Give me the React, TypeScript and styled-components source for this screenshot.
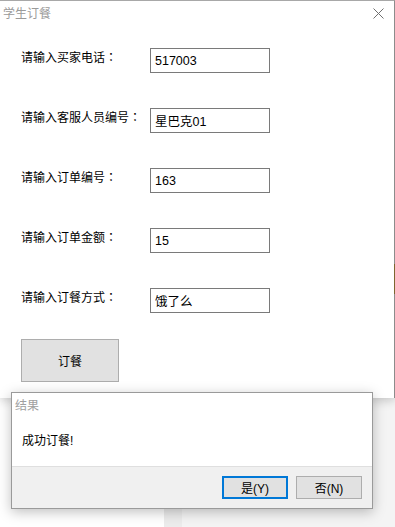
import React from 'react';
import styled, { createGlobalStyle } from 'styled-components';

const GlobalStyle = createGlobalStyle`
  html, body {
    margin: 0;
    padding: 0;
  }
  body {
    font-family: "Liberation Sans", "Noto Sans CJK SC", sans-serif;
    font-size: 12px;
    color: #000;
  }
`;

const Desktop = styled.div`
  position: relative;
  width: 395px;
  height: 527px;
  overflow: hidden;
  background: linear-gradient(
    to right,
    #ffffff 164px,
    #ececec 164px,
    #ececec 182px,
    #f4f4f4 182px
  );
`;

const MainWindow = styled.div`
  position: absolute;
  left: 0;
  top: 0;
  width: 394px;
  height: 397px;
  background: #fff;
  border-top: 1px solid #a8a8a8;
  border-right: 1px solid #8c8c8c;
  box-shadow: 0 2px 10px rgba(0, 0, 0, 0.22);
  display: flex;
  flex-direction: column;
`;

const AccentMark = styled.div`
  position: absolute;
  right: -1px;
  top: 263px;
  width: 1px;
  height: 30px;
  background: #7d6630;
`;

const TitleBar = styled.div`
  height: 28px;
  display: flex;
  align-items: center;
  justify-content: space-between;
  padding: 0 10px 0 3px;
`;

const TitleText = styled.span`
  color: #9a9a9a;
  font-size: 12px;
  line-height: 28px;
  margin-top: -2px;
`;

const CloseIcon = styled.svg`
  width: 11px;
  height: 11px;
  margin-top: -3px;
`;

const Form = styled.div`
  display: flex;
  flex-direction: column;
  gap: 35px;
  padding: 19px 0 0 21px;
`;

const Row = styled.div`
  display: flex;
  align-items: flex-start;
`;

const Label = styled.span`
  width: 129px;
  line-height: 17px;
  font-size: 12px;
  white-space: nowrap;
`;

const Colon = styled.span`
  font-family: "Noto Sans CJK TC", "Noto Sans CJK SC", sans-serif;
`;

const TextBox = styled.input`
  box-sizing: border-box;
  width: 120px;
  height: 25px;
  border: 1px solid #7a7a7a;
  padding: 0 0 0 4px;
  margin: 0;
  font-family: "Liberation Sans", "Noto Sans CJK SC", sans-serif;
  font-size: 12.5px;
  color: #000;
  background: #fff;
  outline: none;
`;

const OrderButton = styled.button`
  box-sizing: border-box;
  width: 98px;
  height: 43px;
  margin-top: -9px;
  background: #e1e1e1;
  border: 1px solid #adadad;
  font-family: "Liberation Sans", "Noto Sans CJK SC", sans-serif;
  font-size: 12px;
  color: #000;
  padding: 0;
`;

const Dialog = styled.div`
  position: absolute;
  left: 11px;
  top: 392px;
  width: 360px;
  height: 115px;
  background: #fff;
  border: 1px solid #9a9a9a;
  box-shadow: 0 3px 12px rgba(0, 0, 0, 0.25);
  display: flex;
  flex-direction: column;
`;

const DialogTitle = styled.div`
  height: 26px;
  padding-left: 3px;
  color: #a0a0a0;
  font-size: 12px;
  line-height: 26px;
`;

const DialogBody = styled.div`
  flex: 1;
  padding: 14px 0 0 10px;
  font-size: 12px;
  line-height: 17px;
`;

const DialogFooter = styled.div`
  height: 42px;
  box-sizing: border-box;
  border-top: 1px solid #dfdfdf;
  background: #f0f0f0;
  display: flex;
  justify-content: flex-end;
  align-items: flex-start;
  gap: 8px;
  padding: 9px 10px 0 0;
`;

const DialogButton = styled.button<{ $primary?: boolean }>`
  box-sizing: border-box;
  width: 66px;
  height: 23px;
  padding: 0;
  background: #e1e1e1;
  border: ${(p) => (p.$primary ? '2px solid #0078d7' : '1px solid #adadad')};
  font-family: "Liberation Sans", "Noto Sans CJK SC", sans-serif;
  font-size: 12px;
  color: #000;
`;

const fields = [
  { label: '请输入买家电话', value: '517003' },
  { label: '请输入客服人员编号', value: '星巴克01' },
  { label: '请输入订单编号', value: '163' },
  { label: '请输入订单金额', value: '15' },
  { label: '请输入订餐方式', value: '饿了么' },
];

export default function App() {
  return (
    <Desktop>
      <GlobalStyle />
      <MainWindow>
        <AccentMark />
        <TitleBar>
          <TitleText>学生订餐</TitleText>
          <CloseIcon viewBox="0 0 11 11">
            <path d="M0.5 0.5 L10.5 10.5 M10.5 0.5 L0.5 10.5" stroke="#6f6f6f" strokeWidth="1" fill="none" />
          </CloseIcon>
        </TitleBar>
        <Form>
          {fields.map((f) => (
            <Row key={f.label}>
              <Label>
                {f.label}
                <Colon>：</Colon>
              </Label>
              <TextBox readOnly value={f.value} />
            </Row>
          ))}
          <OrderButton>订餐</OrderButton>
        </Form>
      </MainWindow>
      <Dialog>
        <DialogTitle>结果</DialogTitle>
        <DialogBody>成功订餐!</DialogBody>
        <DialogFooter>
          <DialogButton $primary>是(Y)</DialogButton>
          <DialogButton>否(N)</DialogButton>
        </DialogFooter>
      </Dialog>
    </Desktop>
  );
}
